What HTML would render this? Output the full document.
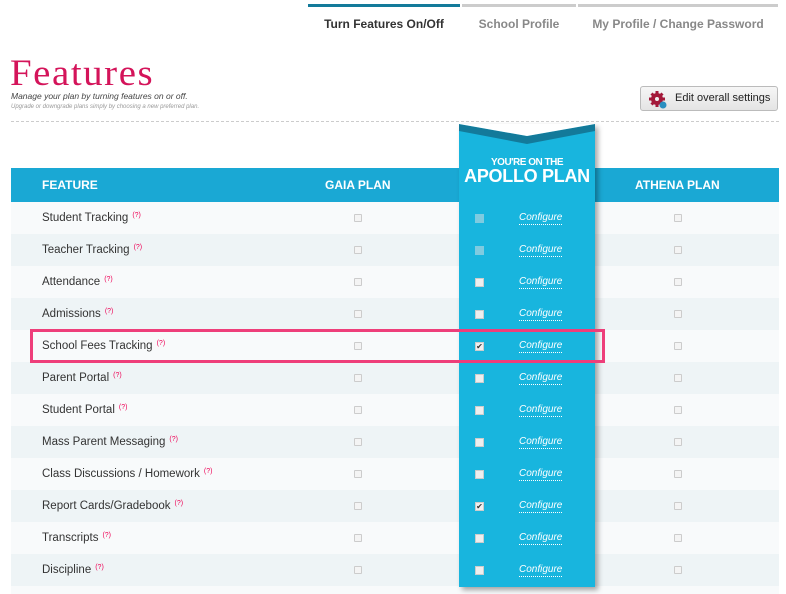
<!DOCTYPE html>
<html><head><meta charset="utf-8"><style>
*{margin:0;padding:0;box-sizing:border-box}
html,body{width:786px;height:594px;overflow:hidden}
body{background:#fff;font-family:"Liberation Sans",sans-serif;position:relative}
.tab{position:absolute;top:4px;height:36px;border-top:3px solid #ccc;font-size:12px;font-weight:bold;color:#888;text-align:center;padding-top:10px}
.abs{position:absolute}
.row{position:absolute;left:11px;width:768px;height:32px;font-size:11.5px;color:#333}
.row span.n{position:absolute;left:31px;top:10px}
.q{font-size:7px;color:#e05;vertical-align:top;margin-left:4px}
.cb{position:absolute;width:8px;height:8px;border:1px solid #ccc;background:#f4f4f4;border-radius:1px;top:12px}
.cf{position:absolute;left:519px;top:10px;font-size:10px;font-style:italic;color:#fff;border-bottom:1px dotted #fff;line-height:12px}
.acb{position:absolute;left:475px;top:12px;width:9px;height:9px;background:#eee;border:1px solid #ccc;font-size:8px;line-height:8px;color:#333;text-align:center}
</style></head><body>
<div class="tab" style="left:308px;width:152px;border-top-color:#137a9a;color:#333">Turn Features On/Off</div>
<div class="tab" style="left:462px;width:114px">School Profile</div>
<div class="tab" style="left:578px;width:200px">My Profile / Change Password</div>
<div class="abs" style="left:10px;top:52px;font-family:'Liberation Serif',serif;font-size:37px;color:#d4145a;letter-spacing:1.5px;transform:scaleX(1.05);transform-origin:left">Features</div>
<div class="abs" style="left:11px;top:91px;font-size:8.5px;font-style:italic;color:#444">Manage your plan by turning features on or off.</div>
<div class="abs" style="left:11px;top:104px;font-size:6px;font-style:italic;color:#999">Upgrade or downgrade plans simply by choosing a new preferred plan.</div>
<div class="abs" style="left:640px;top:86px;width:138px;height:25px;border:1px solid #bbb;border-radius:3px;background:linear-gradient(#f6f6f6,#e4e4e4);font-size:11px;color:#222;padding:5px 0 0 34px">Edit overall settings</div>
<svg class="abs" style="left:648px;top:90px" width="20" height="20" viewBox="0 0 20 20"><circle cx="9" cy="9" r="6" fill="#a3193a"/><g stroke="#a3193a" stroke-width="3"><line x1="9" y1="1" x2="9" y2="17"/><line x1="1" y1="9" x2="17" y2="9"/><line x1="3.5" y1="3.5" x2="14.5" y2="14.5"/><line x1="14.5" y1="3.5" x2="3.5" y2="14.5"/></g><circle cx="9" cy="9" r="2" fill="#f0f0f0"/><circle cx="15" cy="15" r="3.5" fill="#2a8fc0"/></svg>
<div class="abs" style="left:11px;top:121px;width:768px;border-top:1px dashed #ccc"></div>
<div class="abs" style="left:11px;top:168px;width:768px;height:34px;background:#1aa8d4;color:#fff;font-weight:bold;font-size:12px">
<span class="abs" style="left:31px;top:10px">FEATURE</span>
<span class="abs" style="left:314px;top:10px">GAIA PLAN</span>
<span class="abs" style="left:624px;top:10px">ATHENA PLAN</span></div>
<div id="rows"></div>
<div class="abs" style="left:459px;top:124px;width:136px;height:463px;background:#18b5de;box-shadow:3px 3px 5px rgba(0,0,0,.35)"></div>
<svg class="abs" style="left:459px;top:124px" width="136" height="22"><polygon points="0,0 68,12 136,0 136,7 68,20 0,7" fill="#137a9a"/><polygon points="0,0 68,12 136,0 136,-1 0,-1" fill="#fff"/></svg>
<div class="abs" style="left:459px;top:157px;width:136px;text-align:center;color:#fff;font-weight:bold;font-size:10px;letter-spacing:-0.5px">YOU'RE ON THE</div>
<div class="abs" style="left:459px;top:166px;width:136px;text-align:center;color:#fff;font-weight:bold;font-size:18px;letter-spacing:-0.3px">APOLLO PLAN</div>
<div id="ap"></div>
<div class="abs" style="left:30px;top:329px;width:575px;height:34px;border:3px solid #ee3e7a"></div>
<script>
var names=["Student Tracking","Teacher Tracking","Attendance","Admissions","School Fees Tracking","Parent Portal","Student Portal","Mass Parent Messaging","Class Discussions / Homework","Report Cards/Gradebook","Transcripts","Discipline",""];
var h="",a="";
names.forEach(function(n,i){var y=202+i*32;
h+='<div class="row" style="top:'+y+'px;background:'+(i%2?'#eef4f6':'#f8fafb')+'"><span class="n">'+n+(n?'<span class="q">(?)</span>':'')+'</span>'+(n?'<div class="cb" style="left:343px"></div><div class="cb" style="left:663px"></div>':'')+'</div>';
if(n)a+='<div class="abs" style="left:0;top:'+y+'px;width:786px;height:32px"><div class="acb" style="'+(i<2?'background:#7fcbe0;border-color:#7fcbe0':'')+'">'+((i==4||i==9)?'✔':'')+'</div><div class="cf">Configure</div></div>';});
document.getElementById("rows").innerHTML=h;document.getElementById("ap").innerHTML=a;
</script>
</body></html>
